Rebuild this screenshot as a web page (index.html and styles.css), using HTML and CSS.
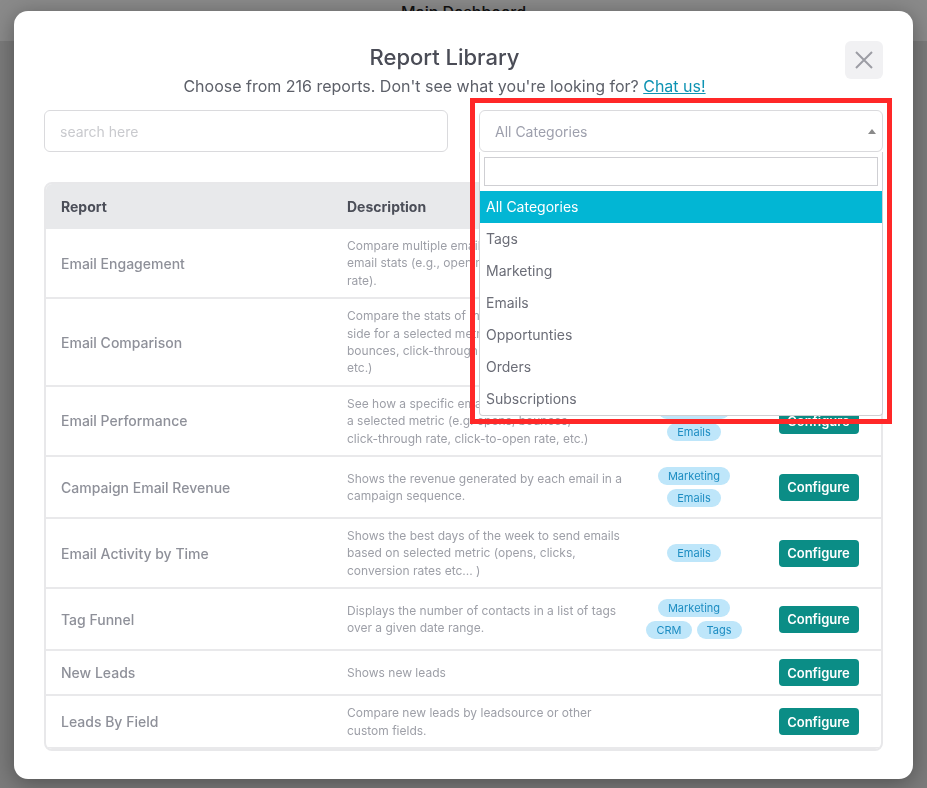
FILE: index.html
```html
<!DOCTYPE html>
<html lang="en">
    <head>
        <meta charset="UTF-8" />
        <meta name="viewport" content="width=device-width, initial-scale=1.0" />
        <title>Report Library</title>
        <link rel="stylesheet" href="styles.css">
    </head>
    <body>
        <div class="page">
            <header class="page-top">Main Dashboard</header>
        </div>
        <div class="overlay"></div>

        <div class="modal">
            <div class="modal-head">
                <div class="head-text">
                    <h1>Report Library</h1>
                    <p>Choose from 216 reports. Don't see what you're looking for? <a href="#">Chat us!</a></p>
                </div>
                <button class="close-btn" aria-label="close">
                    <svg width="18" height="18" viewBox="0 0 18 18">
                        <path d="M1 1 L17 17 M17 1 L1 17" stroke="#9c9da4" stroke-width="2" fill="none" />
                    </svg>
                </button>
            </div>

            <div class="filters">
                <input class="search" type="text" placeholder="search here" />
                <div class="select-wrap">
                    <div class="select">
                        <span>All Categories</span>
                        <span class="arrow"></span>
                    </div>
                    <div class="dropdown">
                        <div class="dropdown-search"><input type="text" /></div>
                        <ul>
                            <li class="active">All Categories</li>
                            <li>Tags</li>
                            <li>Marketing</li>
                            <li>Emails</li>
                            <li>Opportunties</li>
                            <li>Orders</li>
                            <li>Subscriptions</li>
                        </ul>
                    </div>
                    <div class="highlight"></div>
                </div>
            </div>

            <div class="table-wrap">
                <table>
                    <colgroup>
                        <col class="col-report" />
                        <col class="col-desc" />
                        <col class="col-tags" />
                        <col />
                    </colgroup>
                    <thead>
                        <tr>
                            <th>Report</th>
                            <th class="th-desc">Description</th>
                            <th></th>
                            <th></th>
                        </tr>
                    </thead>
                    <tbody>
                        <tr>
                            <td class="name">Email Engagement</td>
                            <td class="desc">Compare multiple emails side by side on<br>email stats (e.g., open rate, click-through<br>rate).</td>
                            <td><div class="tags"><span class="tag">Marketing</span><span class="tag">Emails</span></div></td>
                            <td class="action"><button class="configure">Configure</button></td>
                        </tr>
                        <tr>
                            <td class="name">Email Comparison</td>
                            <td class="desc">Compare the stats of multiple emails side by<br>side for a selected metric (e.g., opens,<br>bounces, click-through rate, open rate,<br>etc.)</td>
                            <td><div class="tags"><span class="tag">Marketing</span><span class="tag">Emails</span></div></td>
                            <td class="action"><button class="configure">Configure</button></td>
                        </tr>
                        <tr>
                            <td class="name">Email Performance</td>
                            <td class="desc">See how a specific email performs for<br>a selected metric (e.g. opens, bounces,<br>click-through rate, click-to-open rate, etc.)</td>
                            <td><div class="tags"><span class="tag">Marketing</span><span class="tag">Emails</span></div></td>
                            <td class="action"><button class="configure">Configure</button></td>
                        </tr>
                        <tr>
                            <td class="name">Campaign Email Revenue</td>
                            <td class="desc">Shows the revenue generated by each email in a campaign sequence.</td>
                            <td><div class="tags"><span class="tag">Marketing</span><span class="tag">Emails</span></div></td>
                            <td class="action"><button class="configure">Configure</button></td>
                        </tr>
                        <tr>
                            <td class="name">Email Activity by Time</td>
                            <td class="desc">Shows the best days of the week to send emails based on selected metric (opens, clicks, conversion rates etc... )</td>
                            <td><div class="tags"><span class="tag">Emails</span></div></td>
                            <td class="action"><button class="configure">Configure</button></td>
                        </tr>
                        <tr>
                            <td class="name">Tag Funnel</td>
                            <td class="desc">Displays the number of contacts in a list of tags over a given date range.</td>
                            <td><div class="tags"><span class="tag">Marketing</span><span class="tag">CRM</span><span class="tag">Tags</span></div></td>
                            <td class="action"><button class="configure">Configure</button></td>
                        </tr>
                        <tr>
                            <td class="name">New Leads</td>
                            <td class="desc">Shows new leads</td>
                            <td></td>
                            <td class="action"><button class="configure">Configure</button></td>
                        </tr>
                        <tr>
                            <td class="name">Leads By Field</td>
                            <td class="desc">Compare new leads by leadsource or other custom fields.</td>
                            <td></td>
                            <td class="action"><button class="configure">Configure</button></td>
                        </tr>
                    </tbody>
                </table>
            </div>
        </div>
    </body>
</html>
```

FILE: styles.css
```css
html,
body {
    margin: 0;
    height: 100%;
    font-family: Inter, "Noto Sans", sans-serif;
}
body {
    background: #e4e4e4;
    overflow: hidden;
}
.page-top {
    height: 41px;
    background: #fff;
    color: #222;
    text-align: center;
    font-size: 16px;
    font-weight: 500;
    line-height: 24px;
}
.overlay {
    position: fixed;
    inset: 0;
    background: rgba(0, 0, 0, 0.46);
}

/* modal */
.modal {
    position: absolute;
    left: 14px;
    top: 11px;
    width: 899px;
    height: 768px;
    box-sizing: border-box;
    padding: 30px 30px 0 30px;
    background: #fff;
    border-radius: 14px;
    box-shadow: 0 4px 22px rgba(0, 0, 0, 0.35);
    overflow: hidden;
}
.modal-head {
    display: flex;
    align-items: flex-start;
}
.head-text {
    flex: 1;
    text-align: center;
}
.head-text h1 {
    margin: 0;
    font-size: 22px;
    line-height: 32px;
    font-weight: 500;
    color: #4a4c56;
}
.head-text p {
    margin: 2px 0 0;
    font-size: 16px;
    line-height: 22px;
    color: #5d6069;
}
.head-text a {
    color: #0e93b3;
    text-decoration: underline;
}
.close-btn {
    width: 38px;
    height: 38px;
    border: none;
    border-radius: 6px;
    background: #f1f1f3;
    display: flex;
    align-items: center;
    justify-content: center;
    padding: 0;
}

/* filters */
.filters {
    margin-top: 13px;
    display: grid;
    grid-template-columns: 404px 404px;
    column-gap: 31px;
}
.search,
.select {
    height: 42px;
    box-sizing: border-box;
    border: 1px solid #dadadd;
    border-radius: 6px;
    padding: 0 15px;
    font-family: inherit;
    font-size: 14px;
}
.search::placeholder {
    color: #c9cace;
    font-size: 14px;
}
.select-wrap {
    position: relative;
}
.select {
    display: flex;
    align-items: center;
    justify-content: space-between;
    padding-right: 6px;
    color: #9ea0ad;
}
.arrow {
    width: 0;
    height: 0;
    border-left: 4px solid transparent;
    border-right: 4px solid transparent;
    border-bottom: 5px solid #8a8a8a;
}
.dropdown {
    position: absolute;
    left: 0;
    top: 100%;
    width: 100%;
    box-sizing: border-box;
    background: #fff;
    border: 1px solid #cfcfd3;
    border-top: none;
    border-radius: 0 0 4px 4px;
    z-index: 5;
}
.dropdown-search {
    padding: 4px 4px 0;
}
.dropdown-search input {
    width: 100%;
    height: 29px;
    box-sizing: border-box;
    border: 1px solid #cfcfd3;
    margin: 1px 0 0;
}
.dropdown ul {
    list-style: none;
    margin: 5px 0 0;
    padding: 0;
}
.dropdown li {
    height: 32px;
    line-height: 32px;
    padding: 0 6px;
    font-size: 14px;
    color: #6b6d77;
}
.dropdown li.active {
    background: #02b6d4;
    color: #fff;
}
.highlight {
    position: absolute;
    left: -9px;
    top: -12px;
    width: 422px;
    height: 326px;
    box-sizing: border-box;
    border: 5px solid #ff2828;
    z-index: 6;
}

/* table */
.table-wrap {
    margin-top: 30px;
    border: 2px solid #e8e8ea;
    border-radius: 8px;
    overflow: hidden;
}
table {
    width: 100%;
    table-layout: fixed;
    border-collapse: collapse;
}
.col-report {
    width: 285px;
}
.col-desc {
    width: 301px;
}
.col-tags {
    width: 124px;
}
th {
    height: 45px;
    padding: 0 15px;
    background: #e8e9eb;
    text-align: left;
    font-size: 14px;
    font-weight: 700;
    color: #4b4e58;
}
th.th-desc {
    padding-left: 16px;
}
tbody tr {
    border-bottom: 2px solid #e9e9eb;
}
td {
    padding: 8px;
    vertical-align: middle;
}
td.name {
    padding-left: 15px;
    font-size: 14px;
    font-weight: 500;
    color: #8e9099;
}
td.desc {
    padding: 8px 2px 8px 16px;
    font-size: 12px;
    line-height: 17.4px;
    color: #9d9fa7;
}
.tags {
    display: flex;
    flex-wrap: wrap;
    justify-content: center;
}
.tag {
    margin: 2px 2.5px;
    height: 18px;
    line-height: 18px;
    padding: 0 10px;
    border-radius: 9px;
    background: #bee6fa;
    color: #1d8dc2;
    font-size: 11px;
}
td.action {
    text-align: center;
}
.configure {
    width: 80px;
    height: 27px;
    border: none;
    border-radius: 4px;
    background: #0b8d86;
    color: #fff;
    font-family: inherit;
    font-size: 13px;
    font-weight: 600;
    padding: 0;
}
```
